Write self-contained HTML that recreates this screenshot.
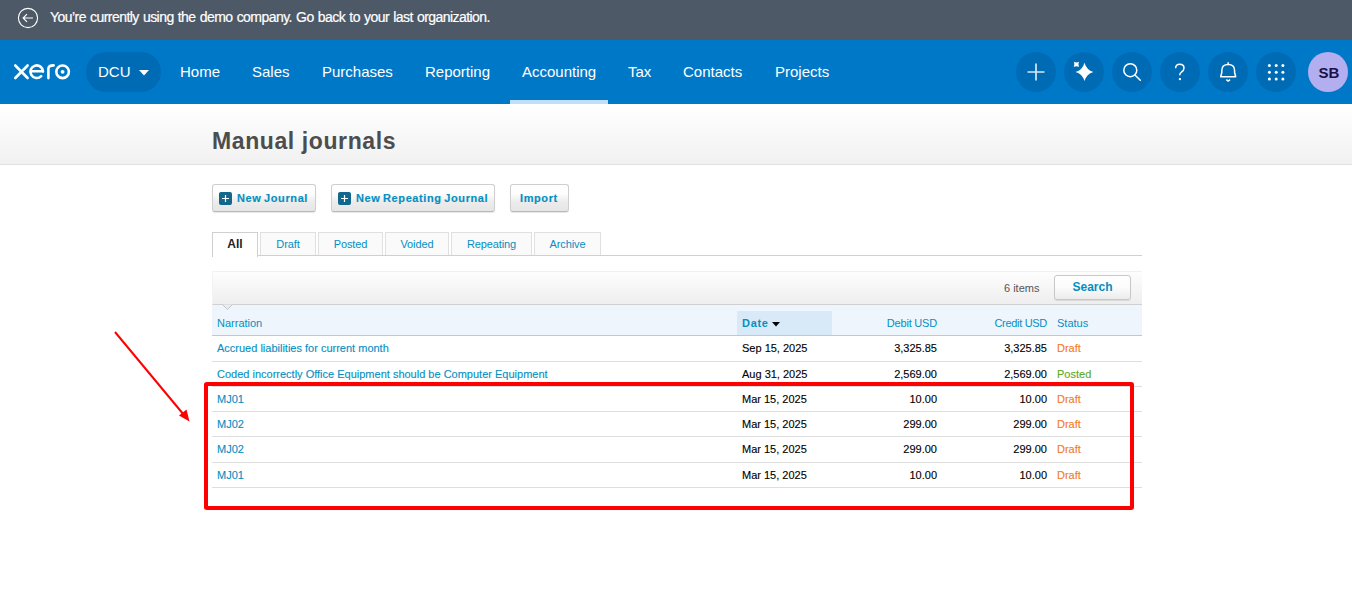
<!DOCTYPE html>
<html><head><meta charset="utf-8">
<style>
*{box-sizing:border-box;margin:0;padding:0}
html,body{width:1352px;height:593px;overflow:hidden;background:#fff;font-family:"Liberation Sans",sans-serif}
.abs{position:absolute}
#banner{position:absolute;left:0;top:0;width:1352px;height:40px;background:#4d5966;color:#fff;font-size:14px;letter-spacing:-0.55px;word-spacing:0.8px}
#banner .txt{position:absolute;left:50px;top:9px;line-height:16px;-webkit-text-stroke:0.2px #fff}
#nav{position:absolute;left:0;top:40px;width:1352px;height:64px;background:#0078c8;color:#fff}
.ni{position:absolute;top:23px;font-size:15px;line-height:18px;color:#fff}
.pill{position:absolute;left:86px;top:12px;width:75px;height:40px;border-radius:20px;background:#006bb5}
.ic{position:absolute;top:12px;width:40px;height:40px;border-radius:20px;background:#006bb5}
#uline{position:absolute;left:510px;top:60px;width:98px;height:4px;background:#bfe0f7}
#hdr{position:absolute;left:0;top:104px;width:1352px;height:61px;background:linear-gradient(#fff,#f1f1f1);border-bottom:1px solid #e0e0e0}
#hdr h1{position:absolute;left:212px;top:23px;font-size:23px;letter-spacing:0.6px;line-height:28px;font-weight:bold;color:#4d4d4d}
.btn{position:absolute;top:184px;height:28px;border:1px solid #cfcfcf;border-bottom-color:#b9b9b9;border-radius:3px;background:linear-gradient(#fff 0%,#fdfdfd 35%,#ececec 65%,#e6e6e6 100%);box-shadow:0 1px 1px rgba(0,0,0,.1);font-size:11px;letter-spacing:0.6px;word-spacing:-1px;font-weight:bold;color:#048fc2;line-height:26px;-webkit-text-stroke:0.15px currentColor}
.plus{position:absolute;top:7px;width:13px;height:13px;background:#11688c;border-radius:2px}
.tab{position:absolute;top:232px;height:24px;border:1px solid #e0e0e0;border-bottom:none;background:#fafafa;font-size:11px;letter-spacing:-0.1px;color:#048fc2;text-align:center;line-height:22px}
.tab.on{background:#fff;color:#222;font-weight:bold;font-size:12px;letter-spacing:0;height:25px;border-color:#d0d0d0}
#tabline{position:absolute;left:258px;top:255px;width:884px;height:1px;background:#d0d0d0}
#fbar{position:absolute;left:212px;top:271px;width:930px;height:34px;border-top:1px solid #f1f1f1;border-left:1px solid #f3f3f3;border-bottom:1px solid #d0d0d0;background:linear-gradient(#fefefe,#eeeeee)}
#thead{position:absolute;left:212px;top:305px;width:930px;height:31px;background:#eef5fd;border-bottom:1px solid #bfc9cf}
.th{position:absolute;top:12px;font-size:11px;line-height:13px;color:#048fc2}
.row{position:absolute;left:212px;width:930px;height:25px;border-bottom:1px solid #dedede}
.c{position:absolute;top:6px;font-size:11px;line-height:13px;color:#000;-webkit-text-stroke:0.12px currentColor}
.c.l{color:#048fc2}
.draft{color:#f47a1f}
.posted{color:#5ca81c}
</style></head><body>
<div id="banner">
  <svg class="abs" style="left:0;top:0" width="40" height="40" viewBox="0 0 40 40"><circle cx="28" cy="18" r="9.6" fill="none" stroke="#fff" stroke-width="1.1"/><path d="M33 18H23.3M27 14.1L23.1 18L27 21.9" fill="none" stroke="#fff" stroke-width="1.2"/></svg>
  <div class="txt">You’re currently using the demo company. Go back to your last organization.</div>
</div>
<div id="nav">
  <div class="pill"></div>
  <div class="ni" style="left:98px">DCU</div>
  <svg class="abs" style="left:139px;top:30px" width="10" height="6"><path d="M0 0H10L5 5.5Z" fill="#fff"/></svg>
  <div class="ni" style="left:180px">Home</div>
  <div class="ni" style="left:252px">Sales</div>
  <div class="ni" style="left:322px">Purchases</div>
  <div class="ni" style="left:425px">Reporting</div>
  <div class="ni" style="left:522px">Accounting</div>
  <div class="ni" style="left:628px">Tax</div>
  <div class="ni" style="left:683px">Contacts</div>
  <div class="ni" style="left:775px">Projects</div>
  <div id="uline"></div>
</div>
<svg class="abs" style="left:0;top:0" width="1352" height="104" viewBox="0 0 1352 104">
<g fill="none" stroke="#fff" stroke-width="2.6" stroke-linecap="round">
<path d="M15.3 65.5L27.6 78M27.6 65.5L15.3 78"/>
<path d="M30.4 71.3H43M43 71.6A6.3 6.3 0 1 0 41.2 76.1"/>
<path d="M48.4 78.1V68.5Q48.6 65.4 53.6 65.4"/>
<circle cx="62.6" cy="71.8" r="6.3"/>
</g>
<circle cx="62.6" cy="71.8" r="1.9" fill="#fff"/>
<g fill="#006bb5">
<circle cx="1036" cy="72" r="20"/><circle cx="1084" cy="72" r="20"/><circle cx="1132" cy="72" r="20"/><circle cx="1180" cy="72" r="20"/><circle cx="1228" cy="72" r="20"/><circle cx="1276" cy="72" r="20"/>
</g>
<circle cx="1328" cy="72" r="20" fill="#b3aeef"/>
<path d="M1036 63.5V80.5M1027.5 72H1044.5" stroke="#fff" stroke-opacity=".85" stroke-width="1.7" fill="none"/>
<path d="M1084.5 62.8Q1086.5 70 1093.4 72Q1086.5 74 1084.5 81.1Q1082.5 74 1075.6 72Q1082.5 70 1084.5 62.8Z" fill="#fff"/>
<path d="M1073.8 61.8Q1076.4 63.2 1079 61.8Q1077.6 64.4 1079 67Q1076.4 65.6 1073.8 67Q1075.2 64.4 1073.8 61.8Z" fill="#fff"/>
<g fill="none" stroke="#fff" stroke-width="1.5">
<circle cx="1130.3" cy="70.2" r="6.5"/><path d="M1135.2 75.2L1140.3 80.2" stroke-linecap="round"/>
<path d="M1175.6 68.2Q1175.6 64.2 1179.8 64.2Q1184 64.2 1184 68Q1184 70.5 1181.5 72Q1179.7 73.2 1179.7 75.3"/>
<path d="M1221.8 70.5Q1221.8 64.6 1228.2 64.6Q1234.6 64.6 1234.6 70.5V72.5L1235.7 76.8H1220.7L1221.8 72.5Z" stroke-linejoin="round"/>
<path d="M1228.2 62.2V64.2M1226.3 79.6L1228.2 81L1230.1 79.6"/>
</g>
<rect x="1178.9" y="78.1" width="2" height="2" fill="#fff"/>
<g fill="#fff">
<circle cx="1269.4" cy="65.4" r="1.5"/><circle cx="1276.2" cy="65.4" r="1.5"/><circle cx="1282.9" cy="65.4" r="1.5"/>
<circle cx="1269.4" cy="72.2" r="1.5"/><circle cx="1276.2" cy="72.2" r="1.5"/><circle cx="1282.9" cy="72.2" r="1.5"/>
<circle cx="1269.4" cy="78.9" r="1.5"/><circle cx="1276.2" cy="78.9" r="1.5"/><circle cx="1282.9" cy="78.9" r="1.5"/>
</g>
</svg>
<div class="abs" style="left:1309px;top:64px;width:40px;text-align:center;font-size:15px;line-height:18px;font-weight:bold;color:#1b1147">SB</div>
<div id="hdr"><h1>Manual journals</h1></div>
<div class="btn" style="left:212px;width:104px"><div class="plus" style="left:6px"><svg width="13" height="13" style="position:absolute;left:0;top:0"><path d="M3 6.5H10M6.5 3V10" stroke="#fff" stroke-width="1.2"/></svg></div><span style="position:absolute;left:24px">New Journal</span></div>
<div class="btn" style="left:331px;width:164px"><div class="plus" style="left:6px"><svg width="13" height="13" style="position:absolute;left:0;top:0"><path d="M3 6.5H10M6.5 3V10" stroke="#fff" stroke-width="1.2"/></svg></div><span style="position:absolute;left:24px">New Repeating Journal</span></div>
<div class="btn" style="left:510px;width:59px"><span style="position:absolute;left:9px">Import</span></div>

<div class="tab on" style="left:212px;width:46px">All</div>
<div class="tab" style="left:260px;width:56px">Draft</div>
<div class="tab" style="left:318px;width:65px">Posted</div>
<div class="tab" style="left:385px;width:64px">Voided</div>
<div class="tab" style="left:451px;width:81px">Repeating</div>
<div class="tab" style="left:534px;width:67px">Archive</div>
<div id="tabline"></div>

<div id="fbar"></div>
<div class="abs" style="left:1004px;top:282px;font-size:11px;line-height:13px;color:#555">6 items</div>
<div class="abs" style="left:1054px;top:275px;width:77px;height:25px;border:1px solid #c8c8c8;border-radius:3px;background:linear-gradient(#fff 0%,#fbfbfb 50%,#ececec 100%);box-shadow:0 1px 1px rgba(0,0,0,.1);text-align:center;font-size:12px;font-weight:bold;line-height:23px;color:#048fc2">Search</div>
<svg class="abs" style="left:0;top:0;z-index:2" width="1352" height="320"><path d="M222.5 304.5L227.5 309.5L232.5 304.5Z" fill="#ececec"/><path d="M222.5 304.5L227.5 309.5L232.5 304.5" fill="none" stroke="#bfc6ca" stroke-width="1"/></svg>
<div id="thead">
<div class="th" style="left:5px">Narration</div>
<div style="position:absolute;left:525px;top:6px;width:95px;height:24px;background:#d8eaf8"></div>
<div class="th" style="left:530px;font-weight:bold;letter-spacing:0.7px">Date</div>
<svg class="abs" style="left:560px;top:17px" width="8" height="5"><path d="M0 0H8L4 4.5Z" fill="#000"/></svg>
<div class="th" style="right:205px;letter-spacing:-0.2px">Debit USD</div>
<div class="th" style="right:95px;letter-spacing:-0.3px">Credit USD</div>
<div class="th" style="left:845px">Status</div>
</div>
<div class="row" style="top:336px;height:26px"><div class="c l" style="left:5px">Accrued liabilities for current month</div><div class="c" style="left:530px">Sep 15, 2025</div><div class="c" style="right:205px">3,325.85</div><div class="c" style="right:95px">3,325.85</div><div class="c draft" style="left:845px">Draft</div></div>
<div class="row" style="top:362px;height:25px"><div class="c l" style="left:5px">Coded incorrectly Office Equipment should be Computer Equipment</div><div class="c" style="left:530px">Aug 31, 2025</div><div class="c" style="right:205px">2,569.00</div><div class="c" style="right:95px">2,569.00</div><div class="c posted" style="left:845px">Posted</div></div>
<div class="row" style="top:387px;height:25px"><div class="c l" style="left:5px">MJ01</div><div class="c" style="left:530px">Mar 15, 2025</div><div class="c" style="right:205px">10.00</div><div class="c" style="right:95px">10.00</div><div class="c draft" style="left:845px">Draft</div></div>
<div class="row" style="top:412px;height:25px"><div class="c l" style="left:5px">MJ02</div><div class="c" style="left:530px">Mar 15, 2025</div><div class="c" style="right:205px">299.00</div><div class="c" style="right:95px">299.00</div><div class="c draft" style="left:845px">Draft</div></div>
<div class="row" style="top:437px;height:26px"><div class="c l" style="left:5px">MJ02</div><div class="c" style="left:530px">Mar 15, 2025</div><div class="c" style="right:205px">299.00</div><div class="c" style="right:95px">299.00</div><div class="c draft" style="left:845px">Draft</div></div>
<div class="row" style="top:463px;height:25px"><div class="c l" style="left:5px">MJ01</div><div class="c" style="left:530px">Mar 15, 2025</div><div class="c" style="right:205px">10.00</div><div class="c" style="right:95px">10.00</div><div class="c draft" style="left:845px">Draft</div></div>
<svg class="abs" style="left:0;top:0" width="1352" height="593"><rect x="206" y="384" width="926" height="124" rx="0.8" fill="none" stroke="#f00" stroke-width="4"/><line x1="115" y1="332" x2="184" y2="415" stroke="#f00" stroke-width="2"/><path d="M189.5 421.5L179 415.5L186.5 409.5Z" fill="#f00"/></svg>
</body></html>
